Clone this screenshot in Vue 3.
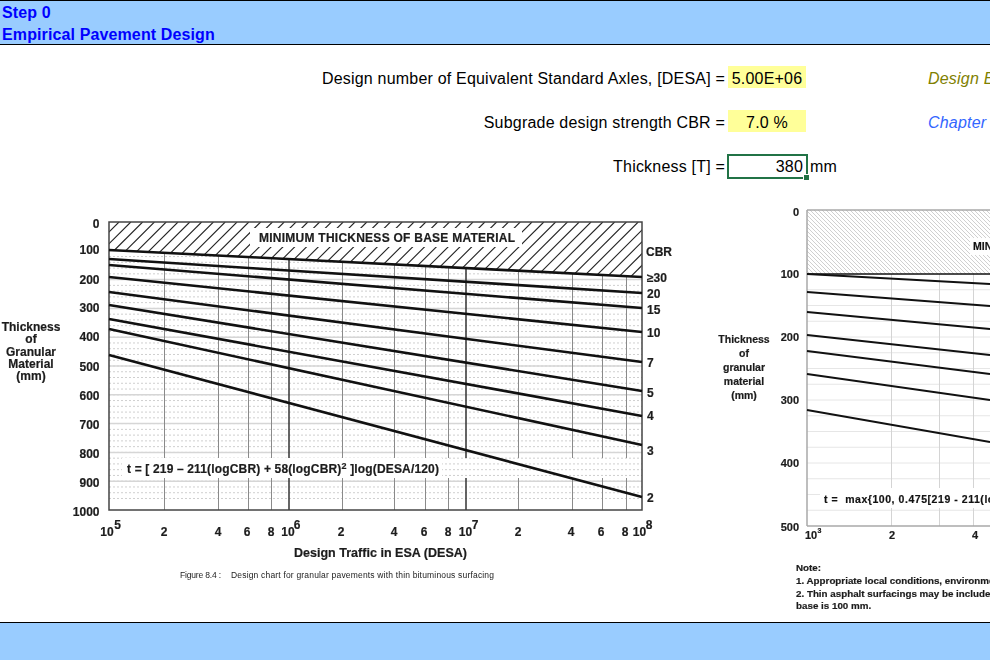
<script setup>
// Chart 1 - granular pavements with thin bituminous surfacing
const left = 109
const right = 642
const top = 222
const bottom = 510

const yTicks = [
  ['0', 224], ['100', 250], ['200', 280], ['300', 308], ['400', 337], ['500', 367],
  ['600', 396], ['700', 425], ['800', 454], ['900', 483], ['1000', 512]
]
const thinX = [164.5, 218.5, 248.5, 271.5, 342.5, 394.5, 425.5, 448.5, 518.5, 572.5, 602.5, 626.5]
const heavyX = [289, 466]
const xTicks = [
  ['2', 164], ['4', 218], ['6', 247], ['8', 271], ['2', 341], ['4', 394],
  ['6', 424], ['8', 448], ['2', 518], ['4', 571], ['6', 601], ['8', 625]
]
const decades = [
  ['5', 107, 117.5], ['6', 288, 297], ['7', 465.5, 475], ['8', 639.5, 649]
]
const curves = [
  [250, 277], [259, 293], [265, 308], [277, 332], [292, 362],
  [305, 391], [319, 416], [329, 445], [355, 497]
]
const cbrLabels = [
  ['CBR', 252], ['≥30', 278], ['20', 294], ['15', 310], ['10', 333],
  ['7', 363], ['5', 393], ['4', 416], ['3', 451], ['2', 498]
]
const titleLines = [['Thickness', 327], ['of', 339], ['Granular', 352], ['Material', 364], ['(mm)', 376]]

const majorY = Array.from({ length: 9 }, (_, i) => top + 28.8 * (i + 1))
const minorY = Array.from({ length: 45 }, (_, i) => top + 5.76 * (i + 4)).filter(y => y < bottom - 2)
const hatchX = Array.from({ length: 52 }, (_, i) => left - 50 + i * 11.8)

// Chart 2 - cut off by the right edge of the sheet
const left2 = 807
const yTicks2 = [['0', 212], ['100', 274], ['200', 337], ['300', 400], ['400', 463], ['500', 527]]
const grid2 = Array.from({ length: 15 }, (_, i) => 289.75 + i * 15.75)
const vert2 = [891.5, 939.5, 973.5]
const curves2 = [[274, 284], [292, 306], [312, 329], [335, 355], [351, 374], [374, 400], [410, 442]]
const titleLines2 = [['Thickness', 339], ['of', 353], ['granular', 367], ['material', 381], ['(mm)', 395]]
const notes = [
  ['Note:', 567.5],
  ['1. Appropriate local conditions, environmental and traffic factors should be considered.', 580],
  ['2. Thin asphalt surfacings may be included in the total thickness where the minimum', 593],
  ['base is 100 mm.', 605.5]
]
</script>

<template>
  <div class="sheet">
    <header class="band head">
      <div>Step 0</div>
      <div>Empirical Pavement Design</div>
    </header>

    <section class="inputs">
      <div class="row">
        <span class="label low">Design number of Equivalent Standard Axles, [DESA] =</span>
        <span class="cell calc">5.00E+06</span>
        <span></span>
        <span class="note low olive">Design Equivalent Standard Axles</span>
      </div>
      <div class="row">
        <span class="label low">Subgrade design strength CBR =</span>
        <span class="cell calc">7.0 %</span>
        <span></span>
        <span class="note low blue">Chapter 8 of the design guide</span>
      </div>
      <div class="row">
        <span class="label">Thickness [T] =</span>
        <span class="cell selected">380<i class="handle"></i></span>
        <span class="unit">mm</span>
        <span></span>
      </div>
    </section>

    <section class="charts">
      <svg class="chart first" viewBox="0 200 680 400" width="680" height="400">
        <defs>
          <clipPath id="above">
            <polygon :points="`${left},${top} ${right},${top} ${right},277 ${left},250`" />
          </clipPath>
          <clipPath id="below">
            <polygon :points="`${left},250 ${right},277 ${right},${bottom} ${left},${bottom}`" />
          </clipPath>
        </defs>

        <g clip-path="url(#above)">
          <line v-for="x in hatchX" :key="x" class="hatch" :x1="x" :y1="top + 60" :x2="x + 60" :y2="top" />
        </g>
        <g clip-path="url(#below)">
          <line v-for="y in minorY" :key="y" class="minor" :x1="left" :y1="y" :x2="right" :y2="y" />
          <line v-for="y in majorY" :key="y" class="major" :x1="left" :y1="y" :x2="right" :y2="y" />
          <rect class="white" x="122" y="458" width="320" height="20" />
          <line v-for="x in thinX" :key="x" class="thin" :x1="x" :y1="top" :x2="x" :y2="458" />
          <line v-for="x in thinX" :key="x + 'b'" class="thin" :x1="x" y1="478" :x2="x" :y2="bottom" />
          <line v-for="x in heavyX" :key="x" class="heavy" :x1="x" :y1="top" :x2="x" y2="458" />
          <line v-for="x in heavyX" :key="x + 'b'" class="heavy" :x1="x" y1="478" :x2="x" :y2="bottom" />
        </g>
        <rect class="frame" :x="left" :y="top" :width="right - left" :height="bottom - top" />
        <line v-for="c in curves" :key="c[0]" class="curve" :x1="left" :y1="c[0]" :x2="right" :y2="c[1]" />

        <rect class="white" x="250" y="228" width="272" height="19" />
        <text class="bold t12" x="259" y="241.5" textLength="256">MINIMUM THICKNESS OF BASE MATERIAL</text>
        <text class="bold t12 wide" x="127" y="472.5">t = [ 219 – 211(logCBR) + 58(logCBR)<tspan class="t9" dy="-4">2</tspan><tspan dy="4"> ]log(DESA/120)</tspan></text>

        <text v-for="t in yTicks" :key="t[0]" class="bold t12 end" x="99.5" :y="t[1] + 4">{{ t[0] }}</text>
        <text v-for="t in titleLines" :key="t[0]" class="bold t12 mid" x="31" :y="t[1] + 4">{{ t[0] }}</text>
        <text v-for="t in cbrLabels" :key="t[0]" class="bold t12" :x="t[0] === 'CBR' ? 646 : 647" :y="t[1] + 4">{{ t[0] }}</text>

        <text v-for="(t, i) in xTicks" :key="i" class="bold t12 mid" :x="t[1]" y="535.5">{{ t[0] }}</text>
        <template v-for="d in decades" :key="d[0]">
          <text class="bold t12 mid" :x="d[1]" y="535.5">10</text>
          <text class="bold t12 mid" :x="d[2]" y="528.5">{{ d[0] }}</text>
        </template>

        <text class="bold t125" x="294" y="556.5" textLength="173">Design Traffic in ESA (DESA)</text>
        <text class="caption" x="180" y="578" textLength="41">Figure 8.4 :</text>
        <text class="caption" x="231" y="578" textLength="263">Design chart for granular pavements with thin bituminous surfacing</text>
      </svg>

      <svg class="chart second" viewBox="700 200 290 422" width="290" height="422">
        <defs>
          <pattern id="fine" width="4" height="4" patternUnits="userSpaceOnUse">
            <path class="fine" d="M-1 -1 L5 5 M3 -1 L5 1 M-1 3 L1 5" />
          </pattern>
        </defs>
        <rect :x="left2" y="210" width="183" height="64" fill="url(#fine)" />
        <rect class="white" x="970" y="238" width="20" height="17" />
        <line v-for="y in grid2" :key="y" class="grid2" :x1="left2" :y1="y" x2="990" :y2="y" />
        <line v-for="x in vert2" :key="x" class="vert2" :x1="x" y1="274" :x2="x" y2="526" />
        <rect class="white" x="820" y="488" width="170" height="20" />
        <line class="axis2" :x1="left2" y1="210" x2="990" y2="210" />
        <line class="axis2" :x1="left2" y1="210" :x2="left2" y2="526" />
        <line class="axis2" :x1="left2" y1="526" x2="990" y2="526" />
        <line class="limit2" :x1="left2" y1="274" x2="990" y2="274" />
        <line v-for="c in curves2" :key="c[0]" class="curve2" :x1="left2" :y1="c[0]" x2="990" :y2="c[1]" />

        <text class="bold t105 dark" x="973" y="250">MINIMUM THICKNESS OF BASE MATERIAL</text>
        <text class="bold t105 dark spaced" x="824" y="503">t =&#160;&#160;max{100, 0.475[219 - 211(logCBR) + 58(logCBR)]}</text>

        <text v-for="t in yTicks2" :key="t[0]" class="bold t11 end" x="799" :y="t[1] + 4">{{ t[0] }}</text>
        <text v-for="t in titleLines2" :key="t[0]" class="bold t105 mid" x="744" :y="t[1] + 4">{{ t[0] }}</text>

        <text class="bold t11" x="805" y="539">10</text>
        <text class="bold t7" x="817.5" y="533">3</text>
        <text class="bold t11 mid" x="892" y="539">2</text>
        <text class="bold t11 mid" x="975" y="539">4</text>

        <text v-for="n in notes" :key="n[1]" class="bold t95" x="796" :y="n[1] + 3.5">{{ n[0] }}</text>
      </svg>
    </section>

    <footer class="band foot"></footer>
  </div>
</template>

<style scoped>
.sheet {
  width: 990px;
  height: 660px;
  display: flex;
  flex-direction: column;
  overflow: hidden;
  background: #fff;
  color: #000;
  font-family: "Liberation Sans", Arial, sans-serif;
  font-size: 16px;
  letter-spacing: 0.2px;
}

.band {
  background: #99ccff;
  flex: none;
}

.head {
  height: 45px;
  box-sizing: border-box;
  padding: 1px 0 0 2px;
  border-top: 1px solid #000;
  border-bottom: 1px solid #000;
  color: #0000ff;
  font-weight: bold;
  line-height: 21.5px;
  letter-spacing: 0.12px;
}

.foot {
  height: 38px;
  margin-top: auto;
  border-top: 1px solid #000;
}

.inputs {
  display: flex;
  flex-direction: column;
  gap: 22px;
  padding-top: 21px;
}

.row {
  display: grid;
  grid-template-columns: 725px 84px 119px 1fr;
  height: 22px;
  align-items: center;
  white-space: nowrap;
}

.label {
  text-align: right;
}

.low {
  padding-top: 4px;
}

.cell {
  margin-left: 3px;
  width: 78px;
  height: 22px;
  line-height: 26px;
  text-align: center;
}

.calc {
  background: #ffff99;
}

.selected {
  position: relative;
  box-sizing: border-box;
  margin-left: 2px;
  width: 81px;
  height: 25px;
  line-height: 22px;
  padding-right: 3px;
  border: 2px solid #217346;
  text-align: right;
}

.handle {
  position: absolute;
  right: -3px;
  bottom: -3px;
  width: 5px;
  height: 5px;
  background: #217346;
  border: 1px solid #fff;
  border-width: 1px 0 0 1px;
}

.unit {
  margin-left: 1px;
}

.note {
  font-style: italic;
  overflow: hidden;
}

.olive {
  color: #808000;
}

.blue {
  color: #3366ff;
}

.charts {
  display: flex;
  gap: 20px;
  margin-top: 24px;
}

.chart {
  flex: none;
  display: block;
  filter: blur(0.3px);
}

text {
  font-family: "Liberation Sans", Arial, sans-serif;
  fill: #1c1c1c;
  letter-spacing: 0;
}

.bold {
  font-weight: bold;
  stroke: #1c1c1c;
  stroke-width: 0.2px;
}

.wide {
  letter-spacing: 0.16px;
}

.spaced {
  letter-spacing: 0.55px;
}

.t12 {
  font-size: 12px;
}

.t125 {
  font-size: 12.5px;
}

.t11 {
  font-size: 11px;
}

.t105 {
  font-size: 10.5px;
}

.t95 {
  font-size: 9.8px;
}

.t9 {
  font-size: 9px;
}

.t7 {
  font-size: 7px;
}

.dark {
  fill: #111;
}

.end {
  text-anchor: end;
}

.mid {
  text-anchor: middle;
}

.caption {
  font-size: 8.5px;
}

.white {
  fill: #fff;
}

.hatch {
  stroke: #222;
  stroke-width: 1.1;
}

.minor {
  stroke: #cfcfcf;
  stroke-width: 1;
  stroke-dasharray: 2 2;
}

.major {
  stroke: #d6d6d6;
  stroke-width: 1.5;
}

.thin {
  stroke: #8a8a8a;
  stroke-width: 1;
}

.heavy {
  stroke: #333;
  stroke-width: 1.5;
}

.frame {
  fill: none;
  stroke: #444;
  stroke-width: 1.5;
}

.curve {
  stroke: #111;
  stroke-width: 2.6;
}

.fine {
  stroke: #bbb;
  stroke-width: 0.7;
  fill: none;
}

.grid2 {
  stroke: #e6e6e6;
  stroke-width: 1;
}

.vert2 {
  stroke: #d4d4d4;
  stroke-width: 1;
}

.axis2 {
  stroke: #a8a8a8;
  stroke-width: 1.5;
}

.limit2 {
  stroke: #111;
  stroke-width: 1.5;
}

.curve2 {
  stroke: #111;
  stroke-width: 1.8;
}
</style>
